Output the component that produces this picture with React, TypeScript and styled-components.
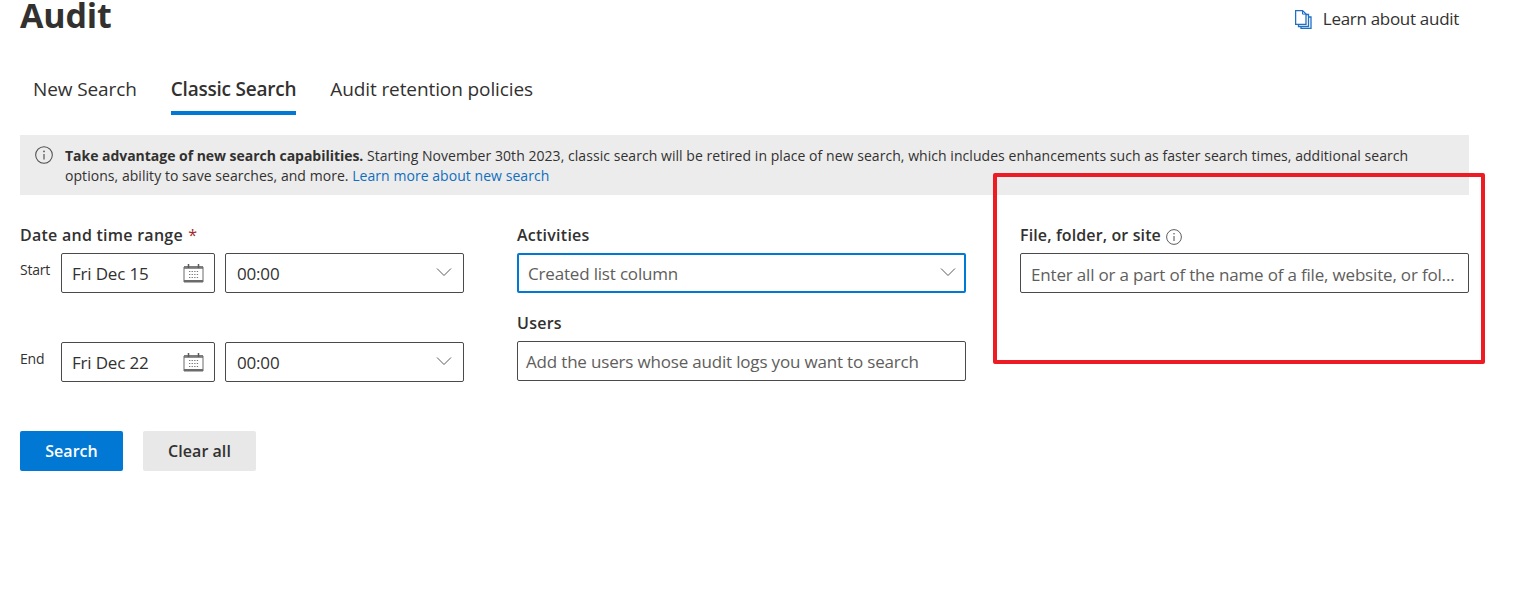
import React from "react";
import styled, { createGlobalStyle } from "styled-components";

const Global = createGlobalStyle`
  html, body { margin: 0; padding: 0; background: #fff; overflow: hidden; }
  body { font-family: "Open Sans", "Noto Sans", "Liberation Sans", sans-serif; color: #323130; }
`;

const Page = styled.div`
  position: relative;
  width: 1514px;
  height: 598px;
  box-sizing: border-box;
  padding: 0 45px 0 20px;
  overflow: hidden;
`;

const Header = styled.header`
  display: flex;
  justify-content: space-between;
  align-items: flex-start;
  height: 72px;
`;

const Title = styled.h1`
  margin: -9px 0 0;
  font-size: 34px;
  line-height: 48px;
  font-weight: 700;
  letter-spacing: -0.2px;
  color: #323130;
`;

const HelpLink = styled.a`
  display: flex;
  align-items: center;
  gap: 11px;
  margin: 7px 10px 0 0;
  font-size: 17px;
  line-height: 24px;
  letter-spacing: -0.3px;
  color: #323130;
`;

const Tabs = styled.nav`
  display: flex;
  gap: 34px;
  height: 43px;
  padding-left: 13px;
  margin-bottom: 20px;
`;

const Tab = styled.div<{ $active?: boolean }>`
  height: 39px;
  font-size: 19px;
  line-height: 35px;
  letter-spacing: ${(p) => (p.$active ? "-0.23px" : "-0.1px")};
  font-weight: ${(p) => (p.$active ? 600 : 400)};
  color: #323130;
  border-bottom: 4px solid ${(p) => (p.$active ? "#0078d4" : "transparent")};
`;

const Banner = styled.div`
  display: flex;
  gap: 12px;
  box-sizing: border-box;
  height: 60px;
  padding: 11px 50px 0 15px;
  background: #ececec;
  margin-bottom: 29px;
`;

const BannerText = styled.p`
  margin: 0;
  font-size: 14px;
  line-height: 20px;
  letter-spacing: 0.05px;
  color: #323130;
  b { font-weight: 700; letter-spacing: -0.03px; }
  a { color: #106ebe; }
`;

const FormGrid = styled.div`
  display: grid;
  grid-template-columns: 497px 503px 449px;
  height: 207px;
`;

const Column = styled.div<{ $gutter?: number }>`
  display: flex;
  flex-direction: column;
  padding-right: ${(p) => p.$gutter ?? 0}px;
`;

const FieldLabel = styled.label<{ $spacing?: number }>`
  display: flex;
  align-items: center;
  gap: 5px;
  height: 21px;
  padding-top: 1px;
  margin-bottom: 7px;
  font-size: 16px;
  line-height: 21px;
  letter-spacing: ${(p) => p.$spacing ?? 0.25}px;
  font-weight: 600;
  color: #323130;
  em { font-style: normal; font-weight: 400; color: #a4262c; margin-left: 1px; }
`;

const LabelInfo = styled.span`
  display: flex;
  margin-top: 3px;
`;

const DateRow = styled.div`
  display: grid;
  grid-template-columns: 41px 154px 249px;
  height: 40px;
  margin-bottom: 49px;
`;

const RowLabel = styled.span`
  font-size: 14px;
  line-height: 18px;
  padding-top: 8px;
  letter-spacing: -0.2px;
  color: #323130;
`;

const Box = styled.div`
  display: flex;
  align-items: center;
  justify-content: space-between;
  box-sizing: border-box;
  height: 40px;
  padding: 0 10px 0 10px;
  background: #fff;
  border: 1px solid #4a4a4a;
  border-radius: 2px;
`;

const TimeBox = styled(Box)`
  margin-left: 10px;
  padding: 0 11px;
`;

const FocusBox = styled(Box)`
  padding: 0 8px 0 9px;
  border: 2px solid #0078d4;
`;

const UsersBox = styled(Box)`
  padding: 0 8px;
`;

const BoxText = styled.span<{ $muted?: boolean; $drop?: number }>`
  font-size: 17px;
  line-height: 22px;
  letter-spacing: -0.18px;
  padding-top: ${(p) => p.$drop ?? 1}px;
  white-space: nowrap;
  color: ${(p) => (p.$muted ? "#605e5c" : "#323130")};
`;

const Spacer = styled.div`
  height: 19px;
`;

const Actions = styled.div`
  display: flex;
  gap: 20px;
`;

const Button = styled.button<{ $primary?: boolean; $w: number }>`
  width: ${(p) => p.$w}px;
  height: 40px;
  padding: 0;
  border: 0;
  border-radius: 2px;
  font-family: inherit;
  font-size: 16px;
  font-weight: 600;
  letter-spacing: 0.05px;
  background: ${(p) => (p.$primary ? "#0078d4" : "#e8e8e8")};
  color: ${(p) => (p.$primary ? "#fff" : "#323130")};
`;

const Highlight = styled.div`
  position: absolute;
  left: 993px;
  top: 173px;
  width: 492px;
  height: 191px;
  box-sizing: border-box;
  border: 4px solid #ed1c24;
  border-radius: 2px;
`;

const InfoIcon = ({ size }: { size: number }) => (
  <svg width={size} height={size} viewBox="0 0 16 16" fill="none" style={{ flexShrink: 0 }}>
    <circle cx="8" cy="8" r="7.4" stroke="#4a4a4a" strokeWidth="0.9" />
    <path d="M8 7v5" stroke="#4a4a4a" strokeWidth="1" />
    <circle cx="8" cy="4.8" r="0.75" fill="#4a4a4a" />
  </svg>
);

const Chevron = () => (
  <svg width="16" height="10" viewBox="0 0 16 10" fill="none" style={{ marginBottom: 3 }}>
    <path d="M1 1.500l7 7 7-7" stroke="#5a5a5a" strokeWidth="1" />
  </svg>
);

const CalendarIcon = () => (
  <svg width="21" height="20" viewBox="0 0 21 20" fill="none">
    <path d="M1 4h19v15H1z" fill="#fff" stroke="#6b6b6b" />
    <path d="M1 3h19v3H1z" fill="#6b6b6b" opacity=".75" />
    <path d="M5.500 1v4M15.500 1v4" stroke="#5a5a5a" strokeWidth="1.500" />
    <path d="M1 18h19" stroke="#6b6b6b" strokeWidth="2" />
    <path d="M6 8.500h10M6 11.500h10M6 14.500h10" stroke="#777" strokeWidth="1.200" strokeDasharray="1.300 1.300" />
  </svg>
);

const DocsIcon = () => (
  <svg width="17" height="19" viewBox="0 0 17 19" fill="none">
    <path d="M6 7h10v11.500H6z" fill="#fff" stroke="#1f6fc4" strokeWidth="1.300" />
    <path d="M3.500 4.500h10v12h-10z" fill="#fff" stroke="#1f6fc4" strokeWidth="1.300" />
    <path d="M.6.600h6.900l3.500 3.500v10.300H.6z" fill="#fff" stroke="#1f6fc4" strokeWidth="1.300" />
    <path d="M7.500.6v3.500h3.500" stroke="#1f6fc4" />
  </svg>
);

export default function App() {
  return (
    <Page>
      <Global />
      <Header>
        <Title>Audit</Title>
        <HelpLink>
          <DocsIcon />
          Learn about audit
        </HelpLink>
      </Header>
      <Tabs>
        <Tab>New Search</Tab>
        <Tab $active>Classic Search</Tab>
        <Tab>Audit retention policies</Tab>
      </Tabs>
      <Banner>
        <InfoIcon size={18} />
        <BannerText>
          <b>Take advantage of new search capabilities.</b> Starting November 30th 2023, classic search will be retired in place of new search, which includes enhancements such as faster search times, additional search options, ability to save searches, and more. <a>Learn more about new search</a>
        </BannerText>
      </Banner>
      <FormGrid>
        <Column $gutter={53}>
          <FieldLabel>
            <span>
              Date and time range <em>*</em>
            </span>
          </FieldLabel>
          <DateRow>
            <RowLabel>Start</RowLabel>
            <Box>
              <BoxText>Fri Dec 15</BoxText>
              <CalendarIcon />
            </Box>
            <TimeBox>
              <BoxText>00:00</BoxText>
              <Chevron />
            </TimeBox>
          </DateRow>
          <DateRow>
            <RowLabel>End</RowLabel>
            <Box>
              <BoxText>Fri Dec 22</BoxText>
              <CalendarIcon />
            </Box>
            <TimeBox>
              <BoxText>00:00</BoxText>
              <Chevron />
            </TimeBox>
          </DateRow>
        </Column>
        <Column $gutter={54}>
          <FieldLabel>Activities</FieldLabel>
          <FocusBox>
            <BoxText $muted>Created list column</BoxText>
            <Chevron />
          </FocusBox>
          <Spacer />
          <FieldLabel>Users</FieldLabel>
          <UsersBox>
            <BoxText $muted>Add the users whose audit logs you want to search</BoxText>
          </UsersBox>
        </Column>
        <Column>
          <FieldLabel $spacing={0.12}>
            File, folder, or site
            <LabelInfo>
              <InfoIcon size={16} />
            </LabelInfo>
          </FieldLabel>
          <Box>
            <BoxText $muted $drop={3}>Enter all or a part of the name of a file, website, or fol...</BoxText>
          </Box>
        </Column>
      </FormGrid>
      <Actions>
        <Button $primary $w={103}>Search</Button>
        <Button $w={113}>Clear all</Button>
      </Actions>
      <Highlight />
    </Page>
  );
}
